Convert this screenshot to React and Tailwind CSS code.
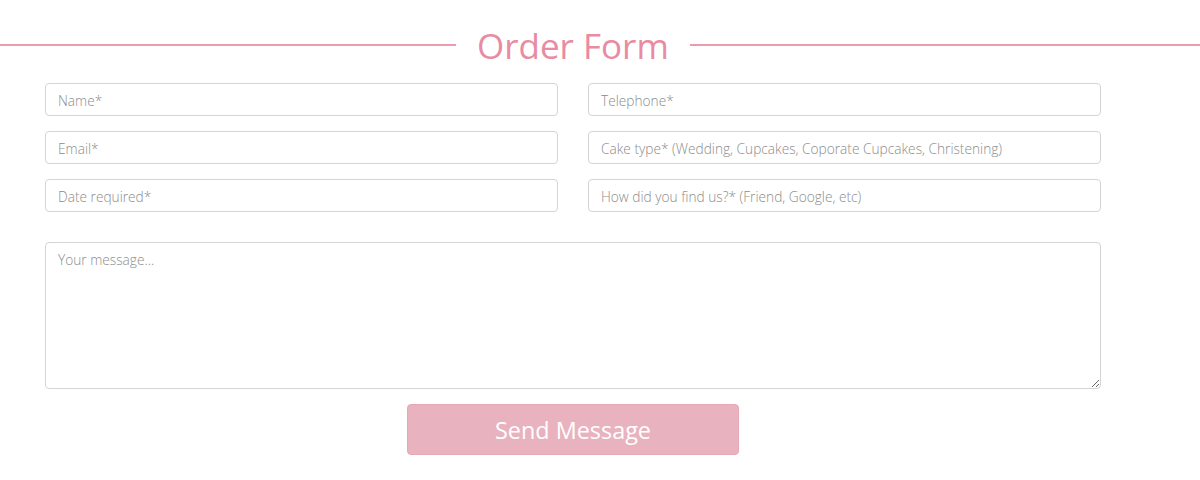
export default function App() {
  const input =
    "h-[33px] w-full rounded-[4px] border border-[#d4d4d4] bg-white px-3 pt-[2px] text-[13.7px] font-light text-[#555] placeholder:text-[#8c8c8c] outline-none";
  return (
    <div className="min-h-[480px] w-[1200px] bg-white" style={{ fontFamily: '"Open Sans", sans-serif' }}>
      <div className="flex h-[90px] items-center pt-0">
        <div className="h-[2px] w-[456px] bg-[#eb9bb0]" />
        <h1 className="px-[21px] text-[35px] font-normal leading-none text-[#e98ba2]">Order Form</h1>
        <div className="h-[2px] flex-1 bg-[#eb9bb0]" />
      </div>
      <div className="ml-[45px] w-[1056px] -mt-[7px]">
        <div className="grid grid-cols-2 gap-x-[30px] gap-y-[15px]">
          <input className={input} placeholder="Name*" />
          <input className={input} placeholder="Telephone*" />
          <input className={input} placeholder="Email*" />
          <input className={input} placeholder="Cake type* (Wedding, Cupcakes, Coporate Cupcakes, Christening)" />
          <input className={input} placeholder="Date required*" />
          <input className={input} placeholder="How did you find us?* (Friend, Google, etc)" />
        </div>
        <textarea
          className="mt-[30px] block h-[147px] w-full rounded-[4px] border border-[#d4d4d4] px-3 py-[7px] text-[13.7px] font-light text-[#555] placeholder:text-[#8c8c8c] outline-none"
          placeholder="Your message..."
        />
        <div className="mt-[15px] flex justify-center">
          <button className="h-[51px] w-[332px] rounded-[4px] border border-[#e5a9b6] bg-[#e8b3be] pt-[3px] text-[23.4px] font-normal text-white">
            Send Message
          </button>
        </div>
      </div>
    </div>
  );
}
